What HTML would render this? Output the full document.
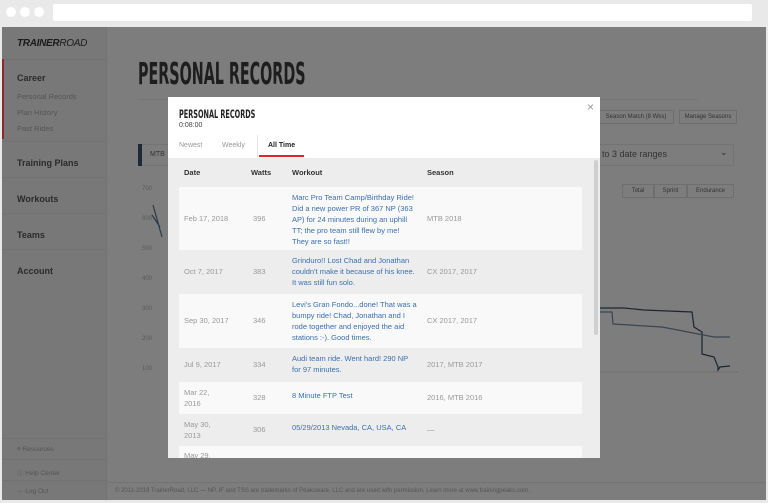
<!DOCTYPE html>
<html><head><meta charset="utf-8"><style>
*{box-sizing:border-box;margin:0;padding:0}
body{width:768px;height:503px;overflow:hidden;background:#e9e9e9;font-family:"Liberation Sans",sans-serif;position:relative}
.abs{position:absolute}
.dot{position:absolute;top:7px;width:10px;height:10px;border-radius:50%;background:#fff}
.url{position:absolute;left:53px;top:4px;width:699px;height:17px;background:#fff;border-radius:2px}
.page{position:absolute;left:2px;top:27px;width:764px;height:473px;background:#7d7d7d;overflow:hidden}
.side{position:absolute;left:0;top:0;width:105px;height:473px;background:#787878;border-right:1px solid #737373}
.side .h{position:absolute;left:15px;font-weight:bold;font-size:9px;color:#2b2b2b}
.side .s{position:absolute;left:15px;font-size:7.5px;color:#555}
.line{position:absolute;left:0;width:105px;height:1px;background:#727272}
.cond{font-family:"DejaVu Sans Condensed","Liberation Sans",sans-serif;font-weight:bold}
.modal{position:absolute;left:168px;top:97px;width:432px;height:361px;background:#fff;overflow:hidden}
.tbl{position:absolute;left:0;top:61px;width:432px;height:300px;background:#ededed}
.row{position:absolute;left:11px;width:403px;font-size:7.5px;color:#999}
.row span{position:absolute}
.lnk{color:#3a6fb0;line-height:11px}
.axis{position:absolute;left:140px;font-size:6px;color:#5a5a5a}
.btn{position:absolute;height:14px;border:1px solid #6e6e6e;font-size:6px;color:#333;text-align:center;line-height:12px}
</style></head><body>
<div class="dot" style="left:6px"></div><div class="dot" style="left:20px"></div><div class="dot" style="left:34px"></div>
<div class="url"></div>
<div class="page">
 <div class="side">
  <div class="abs" style="left:15px;top:11px;font-size:10px;font-style:italic;color:#1a1a1a;letter-spacing:-0.3px"><b>TRAINER</b>ROAD</div>
  <div class="line" style="top:32px"></div>
  <div class="abs" style="left:0;top:32px;width:2px;height:80px;background:#8a2a2a"></div>
  <div class="h" style="top:46px">Career</div>
  <div class="s" style="top:65px">Personal Records</div>
  <div class="s" style="top:81px">Plan History</div>
  <div class="s" style="top:97px">Past Rides</div>
  <div class="line" style="top:114px"></div>
  <div class="h" style="top:131px">Training Plans</div>
  <div class="line" style="top:150px"></div>
  <div class="h" style="top:167px">Workouts</div>
  <div class="line" style="top:186px"></div>
  <div class="h" style="top:203px">Teams</div>
  <div class="line" style="top:222px"></div>
  <div class="h" style="top:239px">Account</div>
  <div class="line" style="top:411px"></div>
  <div class="s" style="top:419px;font-size:6.5px">≡ Resources</div>
  <div class="line" style="top:432px"></div>
  <div class="s" style="top:440px;font-size:6.5px">ⓘ Help Center</div>
  <div class="line" style="top:453px"></div>
  <div class="s" style="top:461px;font-size:6.5px">← Log Out</div>
 </div>
 <div class="abs cond" style="left:136px;top:30px;font-size:30px;color:#1e1e1e;transform:scaleX(0.53);transform-origin:left">PERSONAL RECORDS</div>
 <div class="abs" style="left:136px;top:72px;width:560px;height:1px;background:#757575"></div>
 <div class="btn" style="left:596px;top:83px;width:76px">Season Match (8 Wks)</div>
 <div class="btn" style="left:677px;top:83px;width:58px">Manage Seasons</div>
 <div class="abs" style="left:136px;top:117px;width:596px;height:22px;border:1px solid #737373"></div>
 <div class="abs" style="left:136px;top:117px;width:4px;height:22px;background:#1c2a38"></div>
 <div class="abs" style="left:148px;top:124px;font-size:7px;color:#333">MTB</div>
 <div class="abs" style="left:600px;top:122px;font-size:9px;color:#333">to 3 date ranges</div>
 <div class="abs" style="left:718px;top:120px;font-size:9px;color:#333">⌄</div>
 <div class="btn" style="left:620px;top:157px;width:32px">Total</div>
 <div class="btn" style="left:652px;top:157px;width:33px">Sprint</div>
 <div class="btn" style="left:685px;top:157px;width:47px">Endurance</div>
 <div class="axis" style="top:159px">700</div><div class="axis" style="top:189px">600</div><div class="axis" style="top:219px">500</div><div class="axis" style="top:249px">400</div><div class="axis" style="top:279px">300</div><div class="axis" style="top:309px">200</div><div class="axis" style="top:339px">100</div>
 <svg class="abs" style="left:0;top:0" width="764" height="473"><g fill="none" stroke-width="1.2">
  <path d="M151 178 L160 210 M150 188 L158 200" stroke="#2a3a4a"/>
  <path d="M598 281 L622 281 L642 283 L690 285 L692 300 L700 305 L700 327 L712 330 L716 340 L716 343 L718 340 L728 339" stroke="#1d2630"/>
  <path d="M598 285 L610 285 L611 297 L660 300 L712 310 L728 310" stroke="#3a4550"/>
  <path d="M598 345 L736 345" stroke="#737373"/>
 </g></svg>
 <div class="abs" style="left:105px;top:455px;width:659px;height:1px;background:#737373"></div>
 <div class="abs" style="left:113px;top:461px;font-size:6px;color:#555">© 2011-2018 TrainerRoad, LLC — NP, IF and TSS are trademarks of Peaksware, LLC and are used with permission. Learn more at www.trainingpeaks.com.</div>
</div>
<div class="modal">
 <div class="abs cond" style="left:11px;top:10px;font-size:11.5px;color:#222;transform:scaleX(0.63);transform-origin:left">PERSONAL RECORDS</div>
 <div class="abs" style="left:11px;top:25px;font-size:7px;color:#444">0:08:00</div>
 <div class="abs" style="left:419px;top:3px;font-size:12px;color:#999">×</div>
 <div class="abs" style="left:11px;top:45px;font-size:7px;color:#999">Newest</div>
 <div class="abs" style="left:54px;top:45px;font-size:7px;color:#999">Weekly</div>
 <div class="abs" style="left:89px;top:38px;width:1px;height:23px;background:#e5e5e5"></div>
 <div class="abs" style="left:100px;top:45px;font-size:7px;color:#222;font-weight:bold">All Time</div>
 <div class="abs" style="left:91px;top:58px;width:45px;height:2px;background:#e0262b"></div>
 <div class="tbl">
  <div class="row" style="top:10px;color:#333;font-weight:bold;height:12px"><span style="left:5px">Date</span><span style="left:72px">Watts</span><span style="left:113px">Workout</span><span style="left:248px">Season</span></div>
  <div class="row" style="top:29px;height:63px;background:#f9f9f9"><span style="left:5px;top:27px">Feb 17, 2018</span><span style="left:74px;top:27px">396</span><span class="lnk" style="left:113px;top:5px;width:124px">Marc Pro Team Camp/Birthday Ride! Did a new power PR of 367 NP (363 AP) for 24 minutes during an uphill TT; the pro team still flew by me! They are so fast!!</span><span style="left:248px;top:27px">MTB 2018</span></div>
  <div class="row" style="top:92px;height:44px"><span style="left:5px;top:17px">Oct 7, 2017</span><span style="left:74px;top:17px">383</span><span class="lnk" style="left:113px;top:5px;width:124px">Grinduro!! Lost Chad and Jonathan couldn't make it because of his knee. It was still fun solo.</span><span style="left:248px;top:17px">CX 2017, 2017</span></div>
  <div class="row" style="top:136px;height:54px;background:#f9f9f9"><span style="left:5px;top:22px">Sep 30, 2017</span><span style="left:74px;top:22px">346</span><span class="lnk" style="left:113px;top:5px;width:130px">Levi's Gran Fondo...done! That was a bumpy ride! Chad, Jonathan and I rode together and enjoyed the aid stations :-). Good times.</span><span style="left:248px;top:22px">CX 2017, 2017</span></div>
  <div class="row" style="top:190px;height:34px"><span style="left:5px;top:12px">Jul 9, 2017</span><span style="left:74px;top:12px">334</span><span class="lnk" style="left:113px;top:5px;width:124px">Audi team ride. Went hard! 290 NP for 97 minutes.</span><span style="left:248px;top:12px">2017, MTB 2017</span></div>
  <div class="row" style="top:224px;height:32px;background:#f9f9f9"><span style="left:5px;top:5px;line-height:11px">Mar 22,<br>2016</span><span style="left:74px;top:11px">328</span><span class="lnk" style="left:113px;top:8px">8 Minute FTP Test</span><span style="left:248px;top:11px">2016, MTB 2016</span></div>
  <div class="row" style="top:256px;height:32px"><span style="left:5px;top:5px;line-height:11px">May 30,<br>2013</span><span style="left:74px;top:11px">306</span><span class="lnk" style="left:113px;top:8px">05/29/2013 Nevada, CA, USA, CA</span><span style="left:248px;top:11px">—</span></div>
  <div class="row" style="top:288px;height:30px;background:#f9f9f9"><span style="left:5px;top:5px">May 29,</span></div>
  <div class="abs" style="left:426px;top:2px;width:4px;height:175px;background:#cfcfcf;border-radius:2px"></div>
 </div>
</div>
</body></html>
